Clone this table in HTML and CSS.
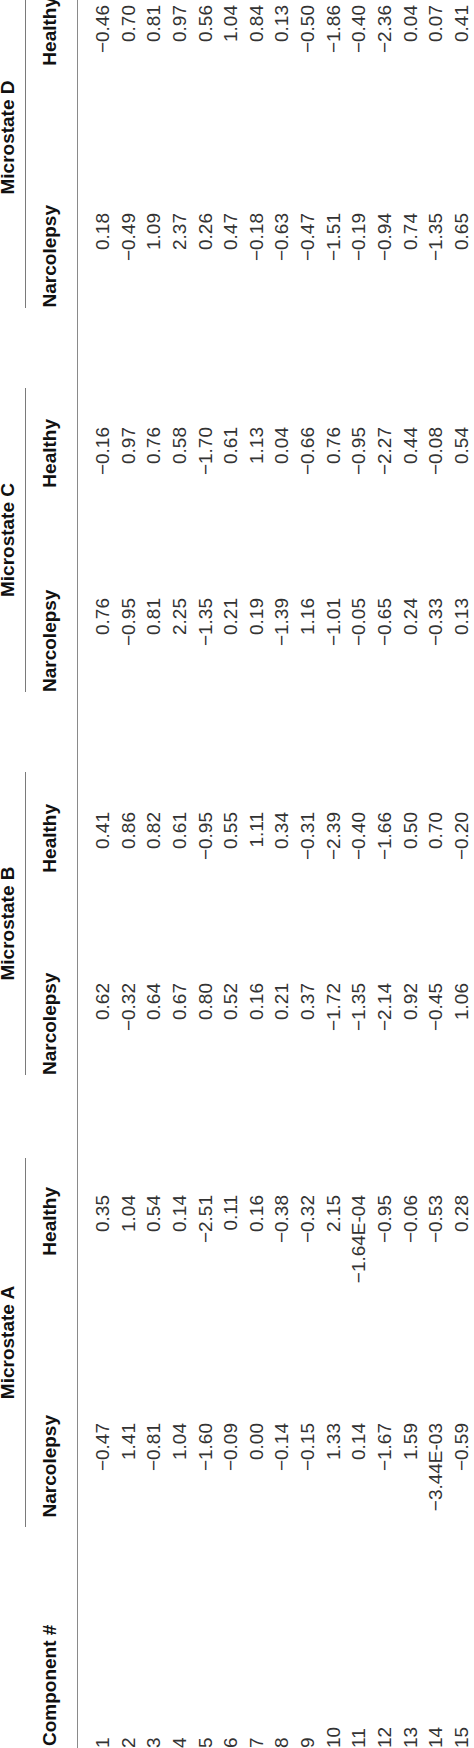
FILE: index.html
```html
<!DOCTYPE html>
<html lang="en">
<head>
<meta charset="utf-8">
<title>Microstate components</title>
<link rel="stylesheet" href="styles.css">
</head>
<body>
<div class="page">
  <div class="sheet">
    <div class="row head1">
      <div class="ms ga">Microstate A</div>
      <div class="ms gb">Microstate B</div>
      <div class="ms gc">Microstate C</div>
      <div class="ms gd">Microstate D</div>
    </div>
    <div class="row head2">
      <div class="hc k1 left">Component #</div>
      <div class="hc k2">Narcolepsy</div>
      <div class="hc k3">Healthy</div>
      <div class="hc k6">Narcolepsy</div>
      <div class="hc k7">Healthy</div>
      <div class="hc k10">Narcolepsy</div>
      <div class="hc k11">Healthy</div>
      <div class="hc k14">Narcolepsy</div>
      <div class="hc k15">Healthy</div>
    </div>
    <div class="body">
      <div class="row data"><div class="c k1 left">1</div><div class="c k2">−0.47</div><div class="c k3">0.35</div><div class="c k6">0.62</div><div class="c k7">0.41</div><div class="c k10">0.76</div><div class="c k11">−0.16</div><div class="c k14">0.18</div><div class="c k15">−0.46</div></div>
      <div class="row data"><div class="c k1 left">2</div><div class="c k2">1.41</div><div class="c k3">1.04</div><div class="c k6">−0.32</div><div class="c k7">0.86</div><div class="c k10">−0.95</div><div class="c k11">0.97</div><div class="c k14">−0.49</div><div class="c k15">0.70</div></div>
      <div class="row data"><div class="c k1 left">3</div><div class="c k2">−0.81</div><div class="c k3">0.54</div><div class="c k6">0.64</div><div class="c k7">0.82</div><div class="c k10">0.81</div><div class="c k11">0.76</div><div class="c k14">1.09</div><div class="c k15">0.81</div></div>
      <div class="row data"><div class="c k1 left">4</div><div class="c k2">1.04</div><div class="c k3">0.14</div><div class="c k6">0.67</div><div class="c k7">0.61</div><div class="c k10">2.25</div><div class="c k11">0.58</div><div class="c k14">2.37</div><div class="c k15">0.97</div></div>
      <div class="row data"><div class="c k1 left">5</div><div class="c k2">−1.60</div><div class="c k3">−2.51</div><div class="c k6">0.80</div><div class="c k7">−0.95</div><div class="c k10">−1.35</div><div class="c k11">−1.70</div><div class="c k14">0.26</div><div class="c k15">0.56</div></div>
      <div class="row data"><div class="c k1 left">6</div><div class="c k2">−0.09</div><div class="c k3">0.11</div><div class="c k6">0.52</div><div class="c k7">0.55</div><div class="c k10">0.21</div><div class="c k11">0.61</div><div class="c k14">0.47</div><div class="c k15">1.04</div></div>
      <div class="row data"><div class="c k1 left">7</div><div class="c k2">0.00</div><div class="c k3">0.16</div><div class="c k6">0.16</div><div class="c k7">1.11</div><div class="c k10">0.19</div><div class="c k11">1.13</div><div class="c k14">−0.18</div><div class="c k15">0.84</div></div>
      <div class="row data"><div class="c k1 left">8</div><div class="c k2">−0.14</div><div class="c k3">−0.38</div><div class="c k6">0.21</div><div class="c k7">0.34</div><div class="c k10">−1.39</div><div class="c k11">0.04</div><div class="c k14">−0.63</div><div class="c k15">0.13</div></div>
      <div class="row data"><div class="c k1 left">9</div><div class="c k2">−0.15</div><div class="c k3">−0.32</div><div class="c k6">0.37</div><div class="c k7">−0.31</div><div class="c k10">1.16</div><div class="c k11">−0.66</div><div class="c k14">−0.47</div><div class="c k15">−0.50</div></div>
      <div class="row data"><div class="c k1 left">10</div><div class="c k2">1.33</div><div class="c k3">2.15</div><div class="c k6">−1.72</div><div class="c k7">−2.39</div><div class="c k10">−1.01</div><div class="c k11">0.76</div><div class="c k14">−1.51</div><div class="c k15">−1.86</div></div>
      <div class="row data"><div class="c k1 left">11</div><div class="c k2">0.14</div><div class="c k3">−1.64E-04</div><div class="c k6">−1.35</div><div class="c k7">−0.40</div><div class="c k10">−0.05</div><div class="c k11">−0.95</div><div class="c k14">−0.19</div><div class="c k15">−0.40</div></div>
      <div class="row data"><div class="c k1 left">12</div><div class="c k2">−1.67</div><div class="c k3">−0.95</div><div class="c k6">−2.14</div><div class="c k7">−1.66</div><div class="c k10">−0.65</div><div class="c k11">−2.27</div><div class="c k14">−0.94</div><div class="c k15">−2.36</div></div>
      <div class="row data"><div class="c k1 left">13</div><div class="c k2">1.59</div><div class="c k3">−0.06</div><div class="c k6">0.92</div><div class="c k7">0.50</div><div class="c k10">0.24</div><div class="c k11">0.44</div><div class="c k14">0.74</div><div class="c k15">0.04</div></div>
      <div class="row data"><div class="c k1 left">14</div><div class="c k2">−3.44E-03</div><div class="c k3">−0.53</div><div class="c k6">−0.45</div><div class="c k7">0.70</div><div class="c k10">−0.33</div><div class="c k11">−0.08</div><div class="c k14">−1.35</div><div class="c k15">0.07</div></div>
      <div class="row data"><div class="c k1 left">15</div><div class="c k2">−0.59</div><div class="c k3">0.28</div><div class="c k6">1.06</div><div class="c k7">−0.20</div><div class="c k10">0.13</div><div class="c k11">0.54</div><div class="c k14">0.65</div><div class="c k15">0.41</div></div>
    </div>
  </div>
</div>
</body>
</html>
```
FILE: styles.css
```css
html, body {
  margin: 0;
  padding: 0;
  background: #ffffff;
}

.page {
  width: 474px;
  height: 1748px;
  overflow: hidden;
}

.sheet {
  width: 1781px;
  height: 474px;
  transform-origin: 0 0;
  transform: translateY(1748px) rotate(-90deg);
  font-family: "Liberation Sans", Arial, Helvetica, sans-serif;
  font-size: 19px;
  color: #111111;
}

.row {
  display: grid;
  grid-template-columns: 221px 112px 228px 29px 83px 100px 171px 32px 80px 102px 171px 31px 80px 103px 208px 30px;
}

.row > * {
  grid-row: 1;
  white-space: nowrap;
}

.k1 { grid-column: 1; }
.k2 { grid-column: 2; }
.k3 { grid-column: 3; }
.k6 { grid-column: 6; }
.k7 { grid-column: 7; }
.k10 { grid-column: 10; }
.k11 { grid-column: 11; }
.k14 { grid-column: 14; }
.k15 { grid-column: 15; }

.ga { grid-column: 2 / span 3; }
.gb { grid-column: 6 / span 3; }
.gc { grid-column: 10 / span 3; }
.gd { grid-column: 14 / span 3; }

.ms {
  font-weight: bold;
  text-align: center;
  line-height: 16px;
  padding-bottom: 9px;
  border-bottom: 1px solid #7a7a7a;
}

.head1 {
  height: 26px;
}

.head2 {
  border-bottom: 1px solid #8a8a8a;
}

.hc {
  font-weight: bold;
  line-height: 20px;
  padding: 14px 0 17px 0;
  text-align: right;
}

.hc.left {
  text-align: left;
  padding-left: 2px;
}

.body {
  padding-top: 12px;
}

.c {
  height: 25.64px;
  line-height: 25.64px;
  text-align: right;
  padding-right: 8px;
  color: #333333;
}

.c.left {
  text-align: left;
  padding-right: 0;
}
```
